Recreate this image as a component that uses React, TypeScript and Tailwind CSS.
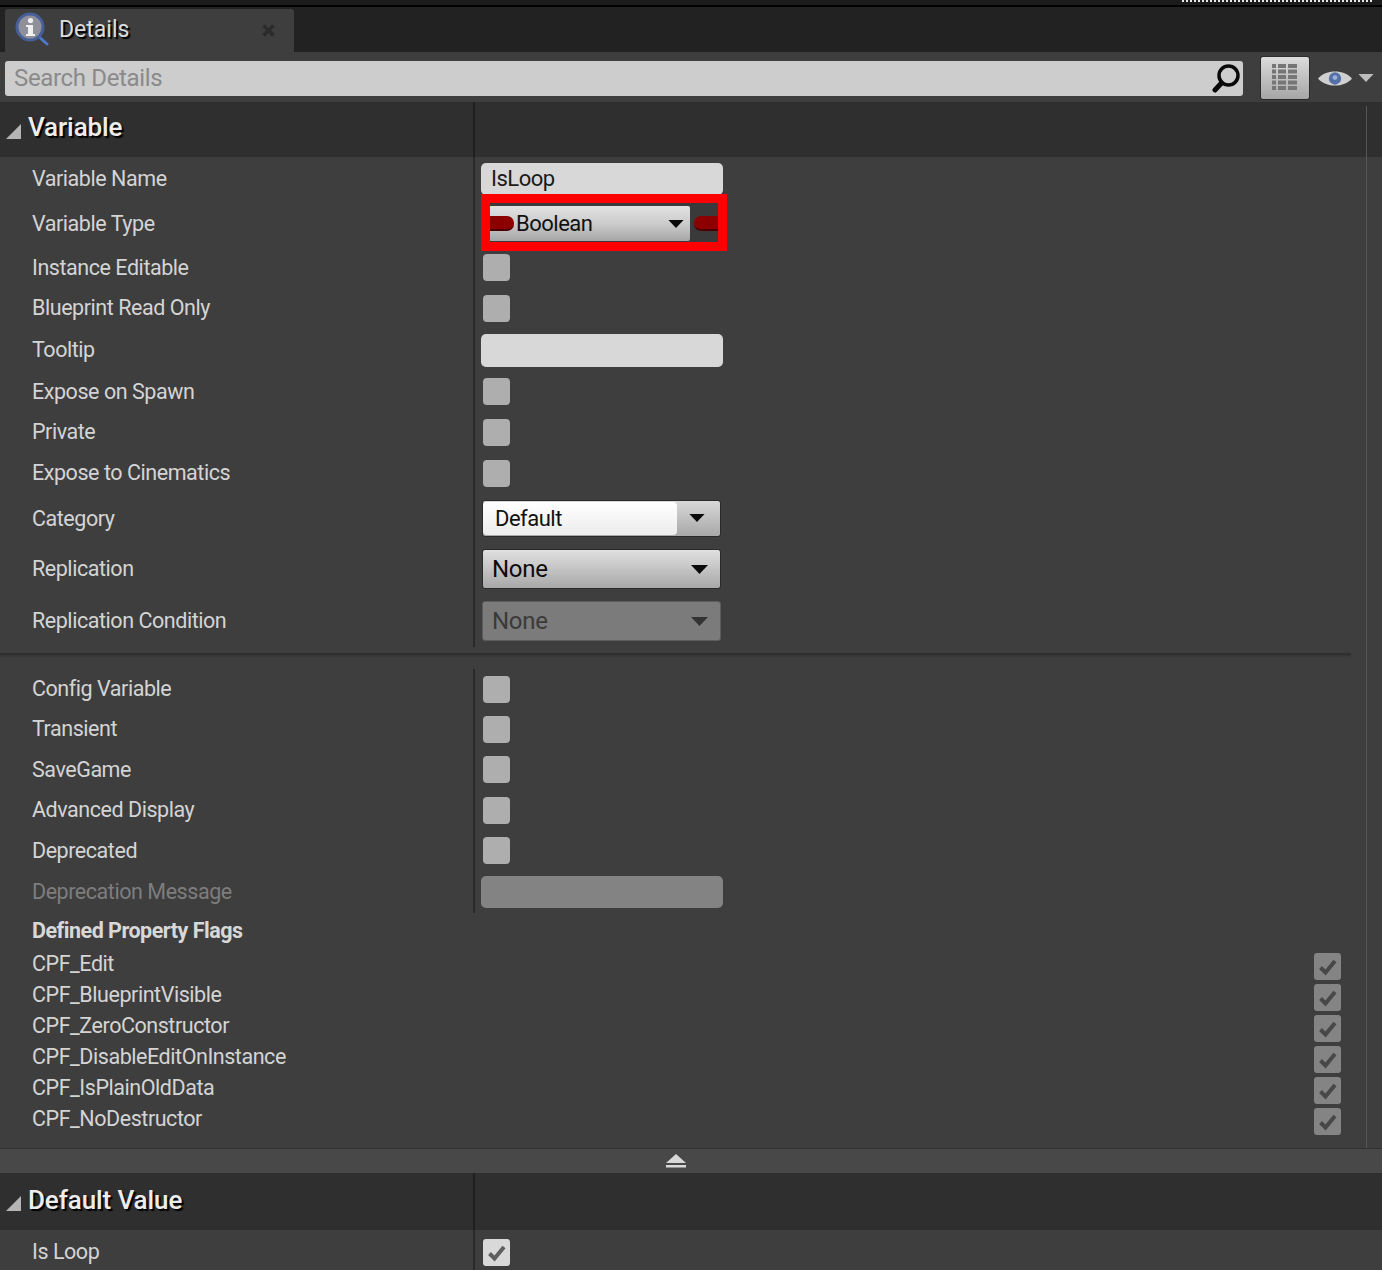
import type { ReactNode } from 'react';

const Caret = ({ className = 'w-[17px] h-[9px]', fill = '#0a0a0a' }: { className?: string; fill?: string }) => (
  <svg viewBox="0 0 17 9" className={className}>
    <path d="M0 0H17L8.5 9Z" fill={fill} />
  </svg>
);

const CheckMark = ({ color = '#555', className = 'w-[21px] h-[21px]' }: { color?: string; className?: string }) => (
  <svg viewBox="0 0 21 21" className={className}>
    <path d="M3.5 11.5L8.5 16.5L18 5" fill="none" stroke={color} strokeWidth="4" />
  </svg>
);

const Checkbox = () => <div className="w-[27px] h-[27px] rounded-[4px] bg-[#aeaeae]" />;

const FlagCheck = () => (
  <div className="w-[27px] h-[27px] rounded-[3px] bg-[#848484] flex items-center justify-center">
    <CheckMark color="#484848" />
  </div>
);

const TextBox = ({ value, className = 'bg-[#d8d8d8]' }: { value?: string; className?: string }) => (
  <div className={`w-[242px] rounded-[5px] flex items-center pl-[10px] text-[22px] tracking-[-0.5px] text-[#1a1a1a] ${className}`}>
    {value}
  </div>
);

const Row = ({ label, height, children, muted, nudge }: { label: string; height: number; children?: ReactNode; muted?: boolean; nudge?: boolean }) => (
  <div className="flex" style={{ height }}>
    <div className={`w-[473px] pl-[32px] flex items-center text-[21.5px] tracking-[-0.45px] ${nudge ? 'pt-[1px]' : ''} ${muted ? 'text-[#7d7d7d]' : 'text-[#d4d4d4]'}`}>
      {label}
    </div>
    <div className="w-[2px] bg-[#2a2a2a]" />
    <div className="flex-1 flex items-center pl-[8px]">{children}</div>
  </div>
);

const SectionHeader = ({ title, height, lift }: { title: string; height: number; lift: string }) => (
  <div className="flex bg-[#2f2f2f]" style={{ height }}>
    <div className="w-[473px] flex items-center pl-[6px] gap-[7px]">
      <svg viewBox="0 0 15 15" className="w-[15px] h-[15px] mt-[3px]">
        <path d="M15 0V15H0Z" fill="#b5b5b5" />
      </svg>
      <span className={`text-[26px] font-medium tracking-[-0.1px] text-[#ededed] [text-shadow:2px_2px_1px_#000] ${lift}`}>{title}</span>
    </div>
    <div className="w-[2px] bg-[#1f1f1f]" />
  </div>
);

const Select = ({ label, height, disabled }: { label: string; height: number; disabled?: boolean }) => (
  <div
    className={`w-[239px] ml-[-1px] rounded-[3px] border flex items-center justify-between pl-[9px] pr-[12px] text-[24px] tracking-[-0.3px] ${
      disabled
        ? 'bg-[#7b7b7b] border-[#5c5c5c] text-[#3a3a3a]'
        : 'bg-gradient-to-b from-[#e0e0e0] via-[#c4c4c4] to-[#a8a8a8] border-[#2a2a2a] text-[#0c0c0c]'
    }`}
    style={{ height }}
  >
    {label}
    <Caret fill={disabled ? '#333' : '#0a0a0a'} />
  </div>
);

const flags = ['CPF_Edit', 'CPF_BlueprintVisible', 'CPF_ZeroConstructor', 'CPF_DisableEditOnInstance', 'CPF_IsPlainOldData', 'CPF_NoDestructor'];

export default function App() {
  return (
    <div className="relative w-[1382px] h-[1270px] overflow-hidden bg-[#3e3e3e] font-['Roboto',sans-serif]">
      {/* top edge */}
      <div className="h-[5px] bg-[#1c1c1c] flex justify-end pr-[10px]">
        <div className="w-[190px] h-[2px] border-t-2 border-dotted border-[#e8e8e8]" />
      </div>
      <div className="h-[2px] bg-black" />

      {/* tab bar */}
      <div className="h-[45px] bg-[#222222] pt-[2px] pl-[5px]">
        <div className="w-[289px] h-[43px] rounded-t-[3px] bg-[#3e3e3e] flex items-center pl-[10px]">
          <svg viewBox="0 0 34 34" className="w-[34px] h-[34px] mt-[-4px]">
            <path d="M22 23L32 32" stroke="#4b78c8" strokeWidth="3" strokeLinecap="round" />
            <circle cx="15" cy="15" r="13" fill="#8f9099" stroke="#47609a" strokeWidth="3" />
            <rect x="13" y="13" width="5" height="10" fill="#f0f0f0" />
            <rect x="11" y="13" width="4" height="2" fill="#f0f0f0" />
            <rect x="11" y="22" width="9" height="2" fill="#f0f0f0" />
            <circle cx="15.5" cy="8.5" r="2.6" fill="#f0f0f0" />
          </svg>
          <span className="ml-[10px] text-[23px] text-[#dcdcdc] [text-shadow:2px_2px_1px_#000]">Details</span>
          <svg viewBox="0 0 13 13" className="w-[13px] h-[13px] ml-auto mr-[19px]">
            <path d="M1.5 1.5L11.5 11.5M11.5 1.5L1.5 11.5" stroke="#2b2b2b" strokeWidth="3.5" />
          </svg>
        </div>
      </div>

      {/* search strip */}
      <div className="h-[50px] flex items-center pl-[5px] pt-[2px]">
        <div className="w-[1238px] h-[35px] rounded-[3px] bg-[#cdcdcd] flex items-center justify-between pl-[9px] pr-[2px] text-[24px] tracking-[-0.35px] text-[#8a8a8a]">
          Search Details
          <svg viewBox="0 0 30 30" className="w-[30px] h-[30px]">
            <circle cx="17.5" cy="12.5" r="9.5" fill="none" stroke="#0a0a0a" strokeWidth="3.5" />
            <path d="M10.5 20L4 27" stroke="#0a0a0a" strokeWidth="5" strokeLinecap="round" />
          </svg>
        </div>
        <div className="ml-[17px] mt-[-1px] w-[50px] h-[44px] rounded-[3px] bg-gradient-to-b from-[#dcdcdc] to-[#a6a6a6] border border-[#2b2b2b] flex items-center justify-center">
          <svg viewBox="0 0 26 27" className="w-[26px] h-[27px]">
            {[0, 5.5, 11, 16.5, 22].map((y) => (
              <g key={y} fill="#767676">
                <rect x="0" y={y} width="4" height="4" />
                <rect x="6" y={y} width="8" height="4" />
                <rect x="16" y={y} width="9" height="4" />
              </g>
            ))}
          </svg>
        </div>
        <svg viewBox="0 0 36 22" className="w-[34px] h-[21px] ml-[8px]">
          <path d="M0 11C8 1 28 1 36 11C28 21 8 21 0 11Z" fill="#cfcfcf" />
          <circle cx="18" cy="11" r="6.5" fill="#5570a8" />
          <circle cx="18" cy="10" r="2.5" fill="#9cb0d8" />
        </svg>
        <Caret className="w-[16px] h-[8px] ml-[6px]" fill="#bdbdbd" />
      </div>

      <SectionHeader title="Variable" height={55} lift="mt-[-4px]" />

      <Row label="Variable Name" height={44}>
        <div className="ml-[-2px]">
          <TextBox value="IsLoop" className="h-[32px] bg-[#d8d8d8] pb-[2px]" />
        </div>
      </Row>
      <Row label="Variable Type" height={46}>
        <div className="relative z-10 ml-[-2px] mt-[-3px] w-[246px] h-[57px] shrink-0 border-[9px] border-[#ff0000] bg-[#3a3a3a] flex items-center pt-[2px]">
          <div className="w-[200px] h-[35px] rounded-r-[2px] bg-gradient-to-b from-[#e2e2e2] via-[#cccccc] to-[#a6a6a6] flex items-center text-[22px] tracking-[-0.5px] text-[#111]">
            <div className="w-[24px] h-[15px] rounded-r-[7px] bg-[#8c0000] border-b-2 border-[#4a0000]" />
            <span className="ml-[2px]">Boolean</span>
            <Caret className="w-[16px] h-[8px] ml-auto mr-[6px]" />
          </div>
          <div className="ml-[4px] w-[24px] h-[15px] rounded-l-[7px] bg-[#8c0000] border-b-2 border-[#4a0000]" />
        </div>
      </Row>
      <Row label="Instance Editable" height={41} nudge><Checkbox /></Row>
      <Row label="Blueprint Read Only" height={41}><Checkbox /></Row>
      <Row label="Tooltip" height={42} nudge>
        <div className="ml-[-2px]"><TextBox className="h-[33px] bg-[#d8d8d8]" /></div>
      </Row>
      <Row label="Expose on Spawn" height={41} nudge><Checkbox /></Row>
      <Row label="Private" height={40}><Checkbox /></Row>
      <Row label="Expose to Cinematics" height={43}><Checkbox /></Row>
      <Row label="Category" height={48}>
        <div className="ml-[-1px] mt-[-2px] w-[239px] h-[37px] rounded-[3px] border border-[#2a2a2a] bg-gradient-to-b from-[#d8d8d8] to-[#a8a8a8] flex items-center overflow-hidden">
          <div className="w-[194px] h-[33px] rounded-[4px] bg-gradient-to-b from-[#ffffff] to-[#ececec] flex items-center pl-[12px] text-[22px] tracking-[-0.5px] text-[#111]">
            Default
          </div>
          <Caret className="w-[16px] h-[8px] ml-[12px]" />
        </div>
      </Row>
      <Row label="Replication" height={52} nudge><Select label="None" height={40} /></Row>
      <Row label="Replication Condition" height={52}><Select label="None" height={40} disabled /></Row>

      {/* separator */}
      <div className="h-[22px] pt-[6px]">
        <div className="w-[1351px] h-[5px] bg-gradient-to-b from-[#2c2c2c] to-[#3e3e3e]" />
      </div>

      <Row label="Config Variable" height={40}><Checkbox /></Row>
      <Row label="Transient" height={40}><Checkbox /></Row>
      <Row label="SaveGame" height={41} nudge><Checkbox /></Row>
      <Row label="Advanced Display" height={40}><Checkbox /></Row>
      <Row label="Deprecated" height={41} nudge><Checkbox /></Row>
      <Row label="Deprecation Message" height={42} muted nudge>
        <div className="ml-[-2px]"><TextBox className="h-[32px] bg-[#838383]" /></div>
      </Row>

      <div className="h-[35px] pl-[32px] pt-[2px] flex items-center text-[21.5px] tracking-[-0.5px] font-bold text-[#d8d8d8]">Defined Property Flags</div>
      <div className="h-[200px]">
        {flags.map((flag) => (
          <div key={flag} className="h-[31px] pl-[32px] pr-[41px] flex items-center justify-between text-[21.5px] tracking-[-0.45px] text-[#d4d4d4]">
            <span className="mt-[1px]">{flag}</span>
            <div className="mt-[6px]"><FlagCheck /></div>
          </div>
        ))}
      </div>

      {/* advanced toggle */}
      <div className="h-[25px] bg-[#484848] border-t border-[#333] flex items-center pl-[666px]">
        <svg viewBox="0 0 20 14" className="w-[20px] h-[14px]">
          <path d="M10 0L20 9H0Z" fill="#d8d8d8" />
          <rect y="11" width="20" height="2.5" fill="#d8d8d8" />
        </svg>
      </div>

      <SectionHeader title="Default Value" height={57} lift="mt-[-2px]" />
      <Row label="Is Loop" height={44} nudge>
        <div className="w-[27px] h-[27px] rounded-[3px] bg-[#d9d9d9] flex items-center justify-center">
          <CheckMark color="#5e5e5e" />
        </div>
      </Row>

      {/* scrollbar track edge */}
      <div className="absolute left-[1366px] top-[106px] w-px h-[1042px] bg-[#565656]" />
    </div>
  );
}
